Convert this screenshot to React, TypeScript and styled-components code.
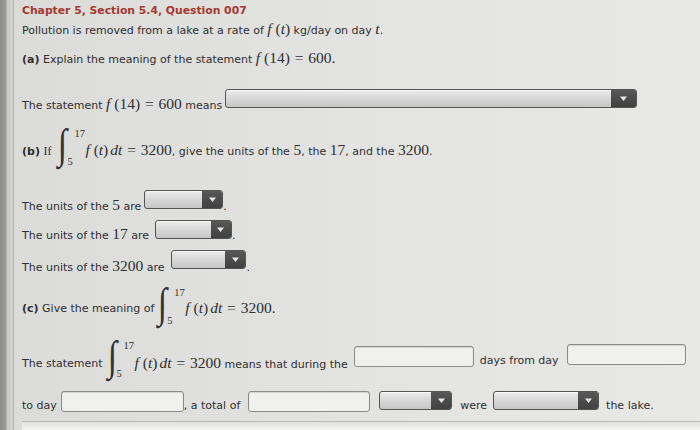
import React from 'react';
import styled, { createGlobalStyle } from 'styled-components';

const Global = createGlobalStyle`
  html, body { margin: 0; padding: 0; }
  body {
    width: 700px; height: 430px; overflow: hidden;
    background: #e2e2e0;
    font-family: "DejaVu Sans", Verdana, sans-serif;
  }
`;

const Screen = styled.div`
  width: 700px; height: 430px; display: flex;
  background: linear-gradient(90deg, #dbdbd9 0%, #e3e3e1 50%, #e8e8e6 100%);
`;

const Bezel = styled.div`
  flex: none; width: 13px;
  background: linear-gradient(90deg, #8c8c8a 0, #9d9d9b 6px, #c8c8c6 7px, #d4d4d2 13px);
  border-right: 1px solid #b3b3b1;
`;

const Page = styled.div`
  flex: 1; display: flex; flex-direction: column;
  padding: 4px 0 0 8px;
  color: #2f2f2f; font-size: 11px;
`;

const Title = styled.div`
  height: 14px; line-height: 14px; font-weight: bold; color: #a5382f; font-size: 10.8px;
`;

const Row = styled.div<{ $mt: number; $h?: number; $align?: string }>`
  display: flex; align-items: ${p => p.$align || 'flex-end'};
  margin-top: ${p => p.$mt}px;
  ${p => (p.$h ? `height: ${p.$h}px;` : '')}
`;

const Txt = styled.span<{ $ml?: number; $mb?: number }>`
  white-space: pre; line-height: 14px; flex: none;
  margin-left: ${p => p.$ml || 0}px; margin-bottom: ${p => p.$mb || 0}px;
`;

const B = styled.b`font-weight: bold;`;

const M = styled.span`
  font-family: "Liberation Serif", "Times New Roman", serif; font-size: 15.5px;
`;
const Small = styled.span`
  font-family: "Liberation Serif", "Times New Roman", serif; font-size: 12px;
`;
const I = styled.i`font-style: italic;`;
const Eq = styled.span`margin: 0 1px;`;
const D = styled.i`font-style: italic; margin-left: 2px;`;

const IntWrap = styled.span<{ $ml: number; $mb: number }>`
  position: relative; display: inline-flex; align-items: center;
  width: 29px; height: 44px; flex: none;
  margin-left: ${p => p.$ml}px; margin-bottom: ${p => p.$mb}px;
`;
const IntSign = styled.span`
  font-family: "Liberation Serif", "Times New Roman", serif; font-size: 40px; line-height: 40px;
  transform: scaleY(1.05) scaleX(0.85); color: #333;
  margin-left: 1px; margin-bottom: 10px;
`;
const Lim = styled.span<{ $top?: boolean }>`
  position: absolute; font-family: "Liberation Serif", serif; font-size: 10.5px; line-height: 10px;
  ${p => (p.$top ? 'top: 2px; left: 18px;' : 'bottom: 4px; left: 11px;')}
`;

const Integral = ({ ml = 3, mb = 0 }: { ml?: number; mb?: number }) => (
  <IntWrap $ml={ml} $mb={mb}>
    <IntSign>∫</IntSign>
    <Lim $top>17</Lim>
    <Lim>5</Lim>
  </IntWrap>
);

const Sel = styled.span<{ $w: number; $ml: number; $mb: number }>`
  display: inline-flex; flex: none; box-sizing: border-box;
  width: ${p => p.$w}px; height: 19px;
  margin-left: ${p => p.$ml}px; margin-bottom: ${p => p.$mb}px;
  border: 1px solid #545454; border-radius: 3px; overflow: hidden;
  background: linear-gradient(#ececec, #d9d9d9 45%, #c6c6c6);
  box-shadow: inset 0 1px 0 #f7f7f7;
`;
const Arrow = styled.span<{ $w: number }>`
  margin-left: auto; width: ${p => p.$w}px; height: 100%;
  background: linear-gradient(#585858, #404040);
  display: flex; align-items: center; justify-content: center;
`;

const Select = ({ w, a = 20, ml = 3, mb = 0 }: { w: number; a?: number; ml?: number; mb?: number }) => (
  <Sel $w={w} $ml={ml} $mb={mb}>
    <Arrow $w={a}>
      <svg width="7" height="5" viewBox="0 0 7 5"><path d="M0 0.5h7L3.5 5z" fill="#e6e6e6" /></svg>
    </Arrow>
  </Sel>
);

const Input = styled.span<{ $w: number; $ml: number; $mb?: number }>`
  display: inline-block; flex: none; box-sizing: border-box;
  width: ${p => p.$w}px; height: 21px;
  margin-left: ${p => p.$ml}px; margin-bottom: ${p => p.$mb || 0}px;
  border: 1px solid #8a8a88; border-radius: 3px;
  background: #f0f0ee; box-shadow: inset 0 1px 1px rgba(0,0,0,0.12);
`;

const Footer = styled.div`
  margin-top: auto; height: 8px; border-top: 1px solid #b8b8b6;
  background: linear-gradient(#e0e0de, #f4f4f2);
`;

const Fdt = ({ end }: { end: string }) => (
  <M><I>f</I> (<I>t</I>)<D>dt</D><Eq> = </Eq>3200{end}</M>
);

export default function App() {
  return (
    <Screen>
      <Global />
      <Bezel />
      <Page>
        <Title>Chapter 5, Section 5.4, Question 007</Title>
        <Row $mt={4}>
          <Txt>Pollution is removed from a lake at a rate of <M><I>f</I> (<I>t</I>)</M> kg/day on day <M><I>t</I></M>.</Txt>
        </Row>
        <Row $mt={13}>
          <Txt><B>(a)</B> Explain the meaning of the statement <M><I>f</I> (14)<Eq> = </Eq>600.</M></Txt>
        </Row>
        <Row $mt={22}>
          <Txt>The statement <M><I>f</I> (14)<Eq> = </Eq>600</M> means</Txt>
          <Select w={412} a={25} ml={3} mb={5} />
        </Row>
        <Row $mt={16} $h={44} $align="center">
          <Txt><B>(b)</B> <Small>If</Small></Txt>
          <Integral ml={5} mb={5} />
          <Txt><Fdt end="" />, give the units of the <M>5</M>, the <M>17</M>, and the <M>3200</M>.</Txt>
        </Row>
        <Row $mt={17}>
          <Txt>The units of the <M>5</M> are</Txt>
          <Select w={79} mb={5} />
          <Txt>.</Txt>
        </Row>
        <Row $mt={6}>
          <Txt>The units of the <M>17</M> are</Txt>
          <Select w={77} ml={6} mb={4} />
          <Txt>.</Txt>
        </Row>
        <Row $mt={7}>
          <Txt>The units of the <M>3200</M> are</Txt>
          <Select w={75} ml={7} mb={6} />
          <Txt>.</Txt>
        </Row>
        <Row $mt={12} $h={44} $align="center">
          <Txt><B>(c)</B> Give the meaning of</Txt>
          <Integral ml={2} mb={2} />
          <Txt><Fdt end="." /></Txt>
        </Row>
        <Row $mt={10} $h={46} $align="center">
          <Txt>The statement</Txt>
          <Integral ml={3} mb={6} />
          <Txt><Fdt end="" /> means that during the</Txt>
          <Input $w={120} $ml={6} $mb={15} />
          <Txt $ml={6} $mb={6}>days from day</Txt>
          <Input $w={119} $ml={8} $mb={19} />
        </Row>
        <Row $mt={4}>
          <Txt>to day</Txt>
          <Input $w={123} $ml={4} $mb={1} />
          <Txt>, a total of</Txt>
          <Input $w={122} $ml={8} $mb={1} />
          <Select w={73} ml={9} mb={3} />
          <Txt $ml={8}>were</Txt>
          <Select w={106} ml={6} mb={3} />
          <Txt $ml={7}>the lake.</Txt>
        </Row>
        <Footer />
      </Page>
    </Screen>
  );
}
